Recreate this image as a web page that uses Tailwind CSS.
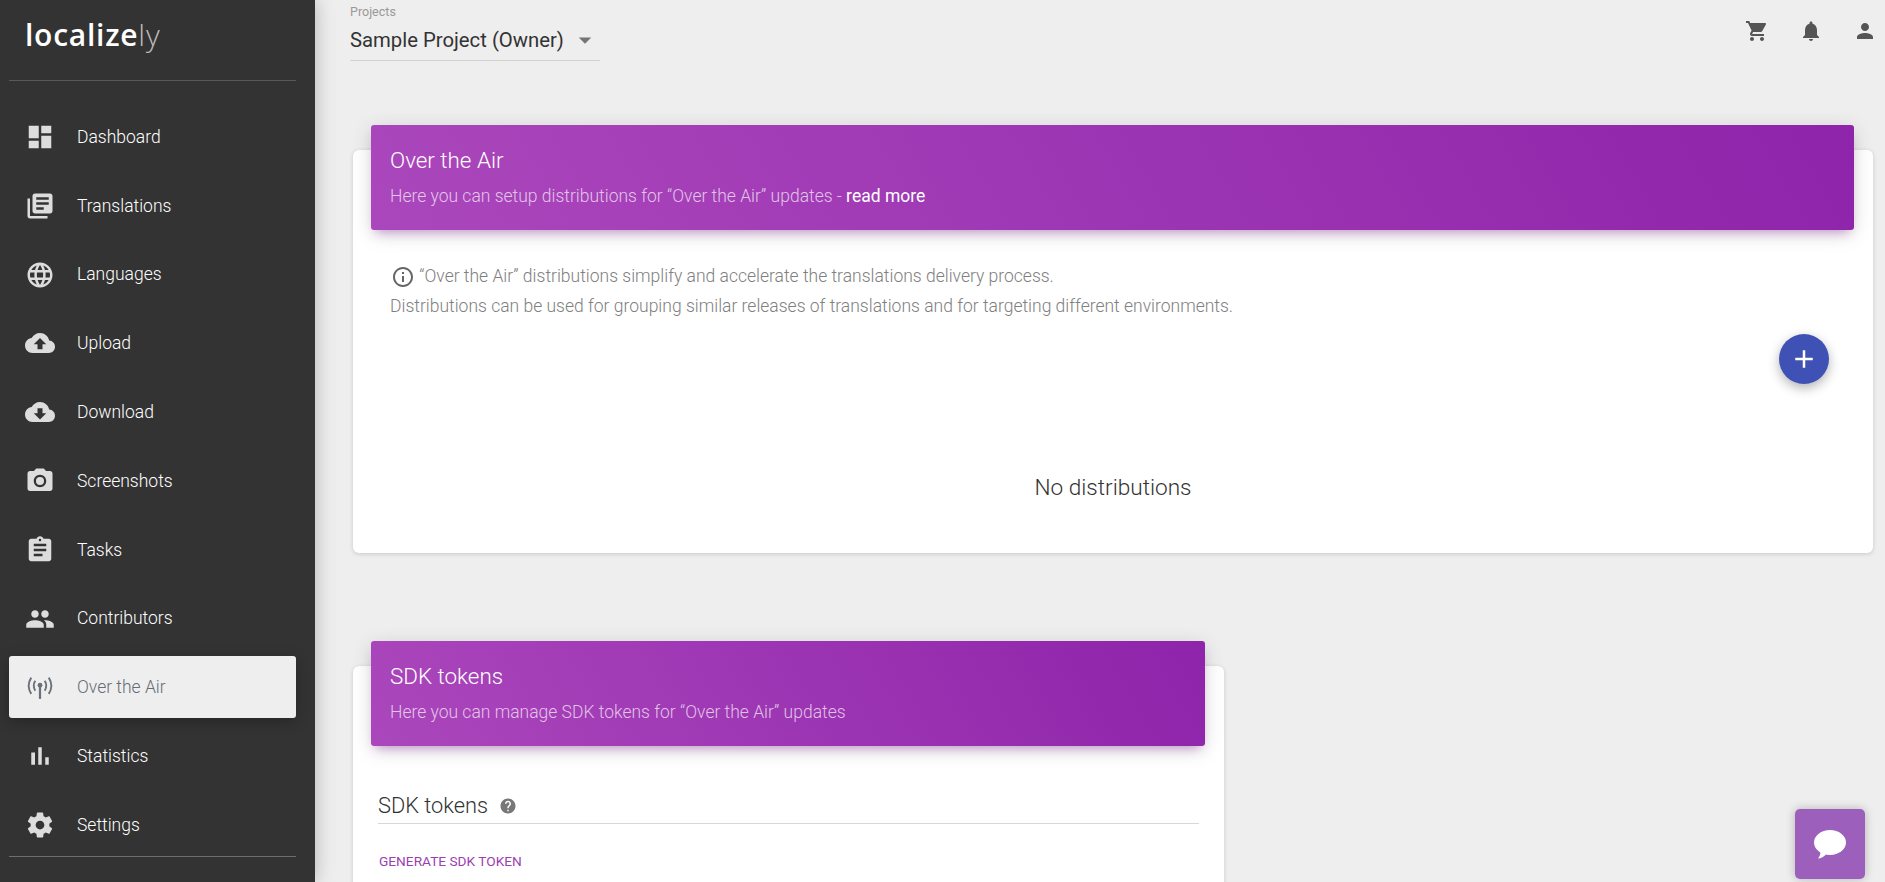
<!DOCTYPE html>
<html lang="en">
<head>
    <meta charset="UTF-8">
    <title>Localizely - Over the Air</title>
    <script src="https://cdn.jsdelivr.net/npm/@tailwindcss/browser@4"></script>
</head>
<body class="bg-[#eeeeee] h-[882px] overflow-hidden flex [font-family:Roboto,sans-serif] font-light">
    <!-- sidebar -->
    <aside class="w-[315px] shrink-0 h-full bg-[#333333] pl-[9px] pr-[19px] shadow-[0_0_18px_rgba(0,0,0,0.25)] z-10">
        <div class="h-[81px] border-b border-[#595959] pl-[16px] pt-[12px]">
            <span class="[font-family:'Open_Sans',sans-serif] text-[30px] leading-[46px] tracking-[0.75px] font-semibold text-white">localize<span class="font-light text-[#bbbbbb]">ly</span></span>
        </div>
        <nav class="mt-[25px] flex flex-col gap-[6.8px]">
            <a class="h-[62px] flex items-center pl-[16px] text-[17.5px] text-white font-light">
                <svg class="w-[30px] h-[30px] fill-[#dddddd] mr-[22px]" viewBox="0 0 24 24"><path d="M3 13h8V3H3v10zm0 8h8v-6H3v6zm10 0h8V11h-8v10zm0-18v6h8V3h-8z"/></svg>
                <span>Dashboard</span>
            </a>
            <a class="h-[62px] flex items-center pl-[16px] text-[17.5px] text-white font-light">
                <svg class="w-[30px] h-[30px] fill-[#dddddd] mr-[22px]" viewBox="0 0 24 24"><path d="M4 6H2v14c0 1.1.9 2 2 2h14v-2H4V6zm16-4H8c-1.1 0-2 .9-2 2v12c0 1.1.9 2 2 2h12c1.1 0 2-.9 2-2V4c0-1.1-.9-2-2-2zm-1 9H9V9h10v2zm-4 4H9v-2h6v2zm4-8H9V5h10v2z"/></svg>
                <span>Translations</span>
            </a>
            <a class="h-[62px] flex items-center pl-[16px] text-[17.5px] text-white font-light">
                <svg class="w-[30px] h-[30px] fill-[#dddddd] mr-[22px]" viewBox="0 0 24 24"><path d="M11.99 2C6.47 2 2 6.48 2 12s4.47 10 9.99 10C17.52 22 22 17.52 22 12S17.52 2 11.99 2zm6.93 6h-2.95c-.32-1.25-.78-2.45-1.38-3.56 1.84.63 3.37 1.91 4.33 3.56zM12 4.04c.83 1.2 1.48 2.53 1.91 3.96h-3.82c.43-1.43 1.08-2.76 1.91-3.96zM4.26 14C4.1 13.36 4 12.69 4 12s.1-1.36.26-2h3.38c-.08.66-.14 1.32-.14 2 0 .68.06 1.34.14 2H4.26zm.82 2h2.95c.32 1.25.78 2.45 1.38 3.56-1.84-.63-3.37-1.9-4.33-3.56zm2.95-8H5.08c.96-1.66 2.49-2.93 4.33-3.56C8.81 5.55 8.35 6.75 8.03 8zM12 19.96c-.83-1.2-1.48-2.53-1.91-3.96h3.82c-.43 1.43-1.08 2.76-1.91 3.96zM14.34 14H9.66c-.09-.66-.16-1.32-.16-2 0-.68.07-1.35.16-2h4.68c.09.65.16 1.32.16 2 0 .68-.07 1.34-.16 2zm.25 5.56c.6-1.11 1.06-2.31 1.38-3.56h2.95c-.96 1.65-2.49 2.93-4.33 3.56zM16.36 14c.08-.66.14-1.32.14-2 0-.68-.06-1.34-.14-2h3.38c.16.64.26 1.31.26 2s-.1 1.36-.26 2h-3.38z"/></svg>
                <span>Languages</span>
            </a>
            <a class="h-[62px] flex items-center pl-[16px] text-[17.5px] text-white font-light">
                <svg class="w-[30px] h-[30px] fill-[#dddddd] mr-[22px]" viewBox="0 0 24 24"><path d="M19.35 10.04C18.67 6.59 15.64 4 12 4 9.11 4 6.6 5.64 5.35 8.04 2.34 8.36 0 10.91 0 14c0 3.31 2.69 6 6 6h13c2.76 0 5-2.24 5-5 0-2.64-2.05-4.78-4.65-4.96zM14 13v4h-4v-4H7l5-5 5 5h-3z"/></svg>
                <span>Upload</span>
            </a>
            <a class="h-[62px] flex items-center pl-[16px] text-[17.5px] text-white font-light">
                <svg class="w-[30px] h-[30px] fill-[#dddddd] mr-[22px]" viewBox="0 0 24 24"><path d="M19.35 10.04C18.67 6.59 15.64 4 12 4 9.11 4 6.6 5.64 5.35 8.04 2.34 8.36 0 10.91 0 14c0 3.31 2.69 6 6 6h13c2.76 0 5-2.24 5-5 0-2.64-2.05-4.78-4.65-4.96zM17 13l-5 5-5-5h3V9h4v4h3z"/></svg>
                <span>Download</span>
            </a>
            <a class="h-[62px] flex items-center pl-[16px] text-[17.5px] text-white font-light">
                <svg class="w-[30px] h-[30px] fill-[#dddddd] mr-[22px]" viewBox="0 0 24 24"><circle cx="12" cy="12" r="3.2"/><path d="M9 2L7.17 4H4c-1.1 0-2 .9-2 2v12c0 1.1.9 2 2 2h16c1.1 0 2-.9 2-2V6c0-1.1-.9-2-2-2h-3.17L15 2H9zm3 15c-2.76 0-5-2.24-5-5s2.24-5 5-5 5 2.24 5 5-2.24 5-5 5z"/></svg>
                <span>Screenshots</span>
            </a>
            <a class="h-[62px] flex items-center pl-[16px] text-[17.5px] text-white font-light">
                <svg class="w-[30px] h-[30px] fill-[#dddddd] mr-[22px]" viewBox="0 0 24 24"><path d="M19 3h-4.18C14.4 1.84 13.3 1 12 1c-1.3 0-2.4.84-2.82 2H5c-1.1 0-2 .9-2 2v14c0 1.1.9 2 2 2h14c1.1 0 2-.9 2-2V5c0-1.1-.9-2-2-2zm-7 0c.55 0 1 .45 1 1s-.45 1-1 1-1-.45-1-1 .45-1 1-1zm2 14H7v-2h7v2zm3-4H7v-2h10v2zm0-4H7V7h10v2z"/></svg>
                <span>Tasks</span>
            </a>
            <a class="h-[62px] flex items-center pl-[16px] text-[17.5px] text-white font-light">
                <svg class="w-[30px] h-[30px] fill-[#dddddd] mr-[22px]" viewBox="0 0 24 24"><path d="M16 11c1.66 0 2.99-1.34 2.99-3S17.66 5 16 5c-1.66 0-3 1.34-3 3s1.34 3 3 3zm-8 0c1.66 0 2.99-1.34 2.99-3S9.66 5 8 5C6.34 5 5 6.34 5 8s1.34 3 3 3zm0 2c-2.33 0-7 1.17-7 3.5V19h14v-2.5c0-2.33-4.67-3.5-7-3.5zm8 0c-.29 0-.62.02-.97.05 1.16.84 1.97 1.97 1.97 3.45V19h6v-2.5c0-2.33-4.67-3.5-7-3.5z"/></svg>
                <span>Contributors</span>
            </a>
            <a class="h-[62px] flex items-center pl-[16px] text-[17.5px] text-[#666c74] font-light bg-[#eeeeee] rounded-[3px] shadow-[0_4px_14px_rgba(0,0,0,0.25)]">
                <svg class="w-[30px] h-[30px] mr-[22px] fill-none stroke-[#6b7178] stroke-[1.5]" viewBox="0 0 24 24"><path d="M5 4.5Q.8 11 5 17.5M8.2 7Q5.8 11 8.2 15M19 4.5Q23.2 11 19 17.5M15.8 7Q18.2 11 15.8 15"/><circle cx="12" cy="10.5" r="1.9" fill="#6b7178" stroke="none"/><path d="M12 11v10.5" stroke-width="1.8"/></svg>
                <span>Over the Air</span>
            </a>
            <a class="h-[62px] flex items-center pl-[16px] text-[17.5px] text-white font-light">
                <svg class="w-[30px] h-[30px] fill-[#dddddd] mr-[22px]" viewBox="0 0 24 24"><path d="M5 9.2h3V19H5zM10.6 5h2.8v14h-2.8zm5.6 8H19v6h-2.8z"/></svg>
                <span>Statistics</span>
            </a>
            <a class="h-[62px] flex items-center pl-[16px] text-[17.5px] text-white font-light">
                <svg class="w-[30px] h-[30px] fill-[#dddddd] mr-[22px]" viewBox="0 0 24 24"><path d="M19.43 12.98c.04-.32.07-.64.07-.98s-.03-.66-.07-.98l2.11-1.65c.19-.15.24-.42.12-.64l-2-3.46c-.12-.22-.39-.3-.61-.22l-2.49 1c-.52-.4-1.08-.73-1.69-.98l-.38-2.65C14.46 2.18 14.25 2 14 2h-4c-.25 0-.46.18-.49.42l-.38 2.65c-.61.25-1.17.59-1.69.98l-2.49-1c-.23-.09-.49 0-.61.22l-2 3.46c-.13.22-.07.49.12.64l2.11 1.65c-.04.32-.07.65-.07.98s.03.66.07.98l-2.11 1.65c-.19.15-.24.42-.12.64l2 3.46c.12.22.39.3.61.22l2.49-1c.52.4 1.08.73 1.69.98l.38 2.65c.03.24.24.42.49.42h4c.25 0 .46-.18.49-.42l.38-2.65c.61-.25 1.17-.59 1.69-.98l2.49 1c.23.09.49 0 .61-.22l2-3.46c.12-.22.07-.49-.12-.64l-2.11-1.65zM12 15.5c-1.93 0-3.5-1.57-3.5-3.5s1.57-3.5 3.5-3.5 3.5 1.57 3.5 3.5-1.57 3.5-3.5 3.5z"/></svg>
                <span>Settings</span>
            </a>
        </nav>
        <div class="border-t border-[#6e6e6e]"></div>
    </aside>

    <main class="flex-1 min-w-0 h-full overflow-hidden pl-[35px] pr-[12px]">
        <!-- top bar -->
        <header class="h-[125px] flex justify-between items-start">
            <div class="w-[250px] h-[61px] border-b border-[#d2d2d2] pt-[5px]">
                <div class="text-[12.5px] leading-[14px] text-[#999999] font-normal">Projects</div>
                <div class="mt-[6px] flex items-center text-[20.3px] leading-[30px] text-[#333333] font-normal">
                    <span>Sample Project (Owner)</span>
                    <svg class="w-[30px] h-[30px] fill-[#757575] ml-[6px]" viewBox="0 0 24 24"><path d="M7 10l5 5 5-5z"/></svg>
                </div>
            </div>
            <div class="flex items-center gap-[30px] pt-[19px] -mr-[4px]">
                <svg class="w-[24px] h-[24px] fill-[#555555]" viewBox="0 0 24 24"><path d="M7 18c-1.1 0-1.99.9-1.99 2S5.9 22 7 22s2-.9 2-2-.9-2-2-2zM1 2v2h2l3.6 7.59-1.35 2.45c-.16.28-.25.61-.25.96 0 1.1.9 2 2 2h12v-2H7.42c-.14 0-.25-.11-.25-.25l.03-.12.9-1.63h7.45c.75 0 1.41-.41 1.75-1.03l3.58-6.49c.08-.14.12-.31.12-.48 0-.55-.45-1-1-1H5.21l-.94-2H1zm16 16c-1.1 0-1.99.9-1.99 2s.89 2 1.99 2 2-.9 2-2-.9-2-2-2z"/></svg>
                <svg class="w-[24px] h-[24px] fill-[#555555]" viewBox="0 0 24 24"><path d="M12 22c1.1 0 2-.9 2-2h-4c0 1.1.89 2 2 2zm6-6v-5c0-3.07-1.64-5.64-4.5-6.32V4c0-.83-.67-1.5-1.5-1.5s-1.5.67-1.5 1.5v.68C7.63 5.36 6 7.92 6 11v5l-2 2v1h16v-1l-2-2z"/></svg>
                <svg class="w-[24px] h-[24px] fill-[#555555]" viewBox="0 0 24 24"><path d="M12 12c2.21 0 4-1.79 4-4s-1.79-4-4-4-4 1.79-4 4 1.79 4 4 4zm0 2c-2.67 0-8 1.34-8 4v2h16v-2c0-2.66-5.33-4-8-4z"/></svg>
            </div>
        </header>

        <!-- over the air card -->
        <section class="ml-[3px] mt-[25px] h-[403px] bg-white rounded-[6px] shadow-[0_1px_4px_rgba(0,0,0,0.16)]">
            <div class="relative -top-[25px] ml-[18px] mr-[19px] h-[105px] rounded-[3px] px-[19px] pt-[20px] bg-linear-[60deg,#ab47bc,#8e24aa] shadow-[0_4px_20px_rgba(0,0,0,0.14),0_7px_10px_-5px_rgba(156,39,176,0.4)]">
                <h2 class="text-[22.4px] leading-[30px] text-white font-light">Over the Air</h2>
                <p class="mt-[9px] text-[17.5px] leading-[24px] text-white/70 font-light">Here you can setup distributions for “Over the Air” updates - <a class="text-white font-normal">read more</a></p>
            </div>
            <div class="-mt-[25px] pt-[31px] pl-[37px] pr-[44px]">
                <div class="text-[17.5px] leading-[30px] text-[#808080] font-light">
                    <svg class="inline-block w-[24px] h-[24px] fill-[#666666] ml-[1px] align-[-7px]" viewBox="0 0 24 24"><path d="M11 17h2v-6h-2v6zm1-15C6.48 2 2 6.48 2 12s4.48 10 10 10 10-4.48 10-10S17.52 2 12 2zm0 18c-4.41 0-8-3.59-8-8s3.59-8 8-8 8 3.59 8 8-3.59 8-8 8zM11 9h2V7h-2v2z"/></svg>
                    “Over the Air” distributions simplify and accelerate the translations delivery process.<br>
                    Distributions can be used for grouping similar releases of translations and for targeting different environments.
                </div>
                <div class="mt-[13px] flex justify-end">
                    <button class="w-[50px] h-[50px] rounded-full bg-[#3f51b5] flex items-center justify-center shadow-[0_4px_12px_rgba(0,0,0,0.3)]">
                        <svg class="w-[30px] h-[30px] fill-white" viewBox="0 0 24 24"><path d="M19 13h-6v6h-2v-6H5v-2h6V5h2v6h6v2z"/></svg>
                    </button>
                </div>
                <div class="mt-[84px] -mr-[7px] text-center text-[22.6px] leading-[40px] text-[#333333] font-light">No distributions</div>
            </div>
        </section>

        <!-- sdk tokens card -->
        <section class="ml-[3px] mt-[113px] w-[871px] h-[400px] bg-white rounded-[6px] shadow-[0_1px_4px_rgba(0,0,0,0.16)]">
            <div class="relative -top-[25px] ml-[18px] mr-[19px] h-[105px] rounded-[3px] px-[19px] pt-[20px] bg-linear-[60deg,#ab47bc,#8e24aa] shadow-[0_4px_20px_rgba(0,0,0,0.14),0_7px_10px_-5px_rgba(156,39,176,0.4)]">
                <h2 class="text-[22.4px] leading-[30px] text-white font-light">SDK tokens</h2>
                <p class="mt-[9px] text-[17.5px] leading-[24px] text-white/70 font-light">Here you can manage SDK tokens for “Over the Air” updates</p>
            </div>
            <div class="-mt-[25px] pt-[43px] pl-[25px] pr-[25px]">
                <div class="h-[35px] border-b border-[#d8d8d8] flex items-center">
                    <span class="text-[21.8px] leading-[30px] text-[#333333] font-light">SDK tokens</span>
                    <svg class="w-[18px] h-[18px] fill-[#777777] ml-[11px]" viewBox="0 0 24 24"><path d="M12 2C6.48 2 2 6.48 2 12s4.48 10 10 10 10-4.48 10-10S17.52 2 12 2zm1 17h-2v-2h2v2zm2.07-7.75l-.9.92C13.45 12.9 13 13.5 13 15h-2v-.5c0-1.1.45-2.1 1.17-2.83l1.24-1.26c.37-.36.59-.86.59-1.41 0-1.1-.9-2-2-2s-2 .9-2 2H8c0-2.21 1.79-4 4-4s4 1.79 4 4c0 .88-.36 1.68-.93 2.25z"/></svg>
                </div>
                <a class="block mt-[27px] pl-[1px] text-[13.7px] leading-[20px] text-[#9c3fb0] font-normal uppercase">Generate SDK token</a>
            </div>
        </section>
    </main>

    <!-- chat widget -->
    <button class="fixed left-[1795px] top-[809px] w-[70px] h-[70px] rounded-[5px] bg-[#9c5fbb] flex items-center justify-center shadow-[0_0_10px_rgba(0,0,0,0.25)]">
        <svg class="w-[34px] h-[29px] fill-white" viewBox="0 0 34 29"><ellipse cx="17" cy="12.5" rx="16" ry="12.5"/><path d="M7 20c1 3 0 6-2 8.5 3 0 6-2 8-4z"/></svg>
    </button>
</body>
</html>
